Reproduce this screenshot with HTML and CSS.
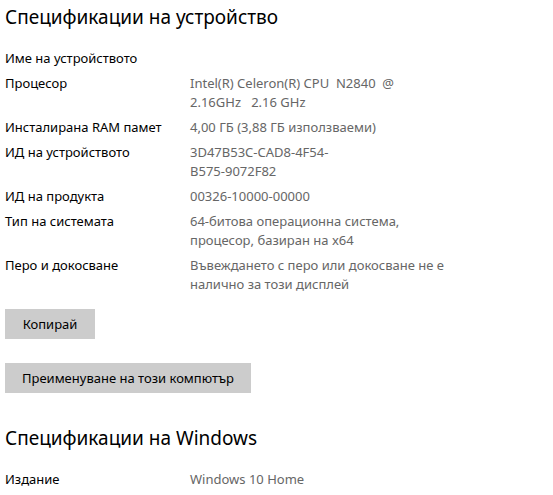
FILE: index.html
```html
<!DOCTYPE html>
<html lang="bg">
<head>
  <meta charset="UTF-8">
  <title>Спецификации</title>
  <link rel="stylesheet" href="styles.css">
</head>
<body>
  <h2 class="section-title">Спецификации на устройство</h2>
  <div class="specs">
    <div class="spec-row">
      <div class="label">Име на устройството</div>
      <div class="value"></div>
    </div>
    <div class="spec-row">
      <div class="label">Процесор</div>
      <div class="value">Intel(R) Celeron(R) CPU  N2840  @<br>2.16GHz   2.16 GHz</div>
    </div>
    <div class="spec-row">
      <div class="label">Инсталирана RAM памет</div>
      <div class="value">4,00 ГБ (3,88 ГБ използваеми)</div>
    </div>
    <div class="spec-row">
      <div class="label">ИД на устройството</div>
      <div class="value">3D47B53C-CAD8-4F54-<br>B575-9072F82</div>
    </div>
    <div class="spec-row">
      <div class="label">ИД на продукта</div>
      <div class="value">00326-10000-00000</div>
    </div>
    <div class="spec-row">
      <div class="label">Тип на системата</div>
      <div class="value">64-битова операционна система,<br>процесор, базиран на x64</div>
    </div>
    <div class="spec-row">
      <div class="label">Перо и докосване</div>
      <div class="value">Въвеждането с перо или докосване не е<br>налично за този дисплей</div>
    </div>
  </div>
  <button class="btn btn-copy">Копирай</button>
  <button class="btn btn-rename">Преименуване на този компютър</button>

  <h2 class="section-title windows-title">Спецификации на Windows</h2>
  <div class="specs">
    <div class="spec-row">
      <div class="label">Издание</div>
      <div class="value">Windows 10 Home</div>
    </div>
  </div>
</body>
</html>
```

FILE: styles.css
```css
body {
  margin: 0;
  padding: 0 5px;
  background: #fff;
  color: #000;
  font-family: "Noto Sans", "Open Sans", sans-serif;
  font-size: 13px;
}
.section-title {
  margin: 3px 0 0;
  font-size: 19px;
  font-weight: 400;
  line-height: 28px;
}
.specs {
  margin-top: 18px;
  display: flex;
  flex-direction: column;
  gap: 6px;
}
.spec-row {
  display: grid;
  grid-template-columns: 185px 1fr;
  line-height: 19px;
}
.value {
  color: #666;
  white-space: pre-wrap;
}
.btn {
  display: block;
  border: none;
  background: #ccc;
  color: #000;
  font-family: inherit;
  font-size: 13px;
  height: 30px;
  padding: 0;
  white-space: nowrap;
}
.btn-copy {
  margin-top: 15px;
  width: 90px;
}
.btn-rename {
  margin-top: 24px;
  width: 246px;
}
.windows-title {
  margin-top: 31px;
}
```
